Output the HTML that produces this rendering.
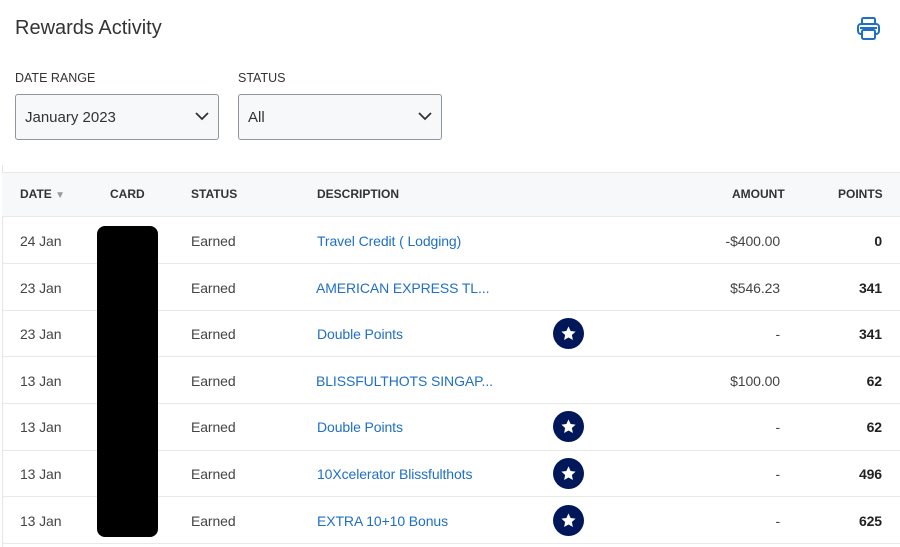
<!DOCTYPE html>
<html><head><style>
*{margin:0;padding:0;box-sizing:border-box}
body{width:900px;height:547px;background:#fff;font-family:"Liberation Sans",sans-serif;color:#333;position:relative;overflow:hidden}
.a{position:absolute}
.t{font-size:20px;color:#333;left:15px;top:17px}
.lbl{font-size:12.5px;color:#333;top:71px}
.sel{top:94px;height:46px;border:1px solid #8e959c;border-radius:3px;background:#f7f8f9;font-size:15px;color:#333;padding:14px 0 0 9px}
.sel svg{position:absolute;right:9px;top:17px}
.hdr{left:2px;top:172px;width:898px;height:45px;background:#f7f8f9;border-top:1px solid #e6e8ea;border-bottom:1px solid #e6e8ea}
.h{font-size:12px;font-weight:bold;color:#333;top:187px}
.row{left:2px;width:898px;height:47px;border-bottom:1px solid #e6e8ea}
.c{font-size:14px;color:#444;letter-spacing:-0.1px}
.lnk{color:#1f6fc5}
.r{text-align:right}
.b{font-weight:bold;color:#222}
.star{width:31px;height:31px;border-radius:50%;background:#00175a;left:553px}
.star svg{position:absolute;left:7px;top:7px}
</style></head><body>
<div class="a t">Rewards Activity</div>
<svg class="a" style="left:856px;top:16px" width="25" height="25" viewBox="0 0 25 25" fill="none" stroke="#1f6fc5" stroke-width="2"><rect x="6" y="2" width="13" height="6" rx="1.5"/><rect x="2" y="8" width="21" height="10" rx="3"/><rect x="6" y="14" width="13" height="9" rx="1.5" fill="#fff"/><line x1="4" y1="12" x2="21" y2="12"/></svg>
<div class="a lbl" style="left:15px">DATE RANGE</div>
<div class="a lbl" style="left:238px">STATUS</div>
<div class="a sel" style="left:15px;width:204px">January 2023<svg width="14" height="9" viewBox="0 0 14 9"><path d="M1 1l6 6 6-6" fill="none" stroke="#333" stroke-width="1.8"/></svg></div>
<div class="a sel" style="left:238px;width:204px">All<svg width="14" height="9" viewBox="0 0 14 9"><path d="M1 1l6 6 6-6" fill="none" stroke="#333" stroke-width="1.8"/></svg></div>
<div class="a" style="left:2px;top:165px;width:1px;height:382px;background:#e3e5e7"></div>
<div class="a hdr"></div>
<div class="a h" style="left:20px">DATE <span style="color:#999;font-size:10px">&#9660;</span></div>
<div class="a h" style="left:110px">CARD</div>
<div class="a h" style="left:191px">STATUS</div>
<div class="a h" style="left:317px">DESCRIPTION</div>
<div class="a h" style="left:732px">AMOUNT</div>
<div class="a h" style="left:838px">POINTS</div>

<div class="a row" style="top:217px"></div>
<div class="a row" style="top:264px"></div>
<div class="a row" style="top:310px"></div>
<div class="a row" style="top:357px"></div>
<div class="a row" style="top:404px"></div>
<div class="a row" style="top:450px"></div>
<div class="a row" style="top:497px"></div>

<div class="a c" style="left:20px;top:233px">24 Jan</div>
<div class="a c" style="left:191px;top:233px">Earned</div>
<div class="a c lnk" style="left:317px;top:233px">Travel Credit ( Lodging)</div>
<div class="a c r" style="right:120px;top:233px">-$400.00</div>
<div class="a c r b" style="right:18px;top:233px">0</div>

<div class="a c" style="left:20px;top:280px">23 Jan</div>
<div class="a c" style="left:191px;top:280px">Earned</div>
<div class="a c lnk" style="left:316px;top:280px">AMERICAN EXPRESS TL...</div>
<div class="a c r" style="right:120px;top:280px">$546.23</div>
<div class="a c r b" style="right:18px;top:280px">341</div>

<div class="a c" style="left:20px;top:326px">23 Jan</div>
<div class="a c" style="left:191px;top:326px">Earned</div>
<div class="a c lnk" style="left:317px;top:326px">Double Points</div>
<div class="a star" style="top:318px"><svg width="17" height="17" viewBox="0 0 24 24"><path d="M12 2l3 6.5 7 .8-5.2 4.8 1.4 7L12 17.6 5.8 21.1l1.4-7L2 9.3l7-.8z" fill="#fff"/></svg></div>
<div class="a c r" style="right:120px;top:326px">-</div>
<div class="a c r b" style="right:18px;top:326px">341</div>

<div class="a c" style="left:20px;top:373px">13 Jan</div>
<div class="a c" style="left:191px;top:373px">Earned</div>
<div class="a c lnk" style="left:316px;top:373px">BLISSFULTHOTS SINGAP...</div>
<div class="a c r" style="right:120px;top:373px">$100.00</div>
<div class="a c r b" style="right:18px;top:373px">62</div>

<div class="a c" style="left:20px;top:419px">13 Jan</div>
<div class="a c" style="left:191px;top:419px">Earned</div>
<div class="a c lnk" style="left:317px;top:419px">Double Points</div>
<div class="a star" style="top:411px"><svg width="17" height="17" viewBox="0 0 24 24"><path d="M12 2l3 6.5 7 .8-5.2 4.8 1.4 7L12 17.6 5.8 21.1l1.4-7L2 9.3l7-.8z" fill="#fff"/></svg></div>
<div class="a c r" style="right:120px;top:419px">-</div>
<div class="a c r b" style="right:18px;top:419px">62</div>

<div class="a c" style="left:20px;top:466px">13 Jan</div>
<div class="a c" style="left:191px;top:466px">Earned</div>
<div class="a c lnk" style="left:317px;top:466px">10Xcelerator Blissfulthots</div>
<div class="a star" style="top:458px"><svg width="17" height="17" viewBox="0 0 24 24"><path d="M12 2l3 6.5 7 .8-5.2 4.8 1.4 7L12 17.6 5.8 21.1l1.4-7L2 9.3l7-.8z" fill="#fff"/></svg></div>
<div class="a c r" style="right:120px;top:466px">-</div>
<div class="a c r b" style="right:18px;top:466px">496</div>

<div class="a c" style="left:20px;top:513px">13 Jan</div>
<div class="a c" style="left:191px;top:513px">Earned</div>
<div class="a c lnk" style="left:317px;top:513px">EXTRA 10+10 Bonus</div>
<div class="a star" style="top:505px"><svg width="17" height="17" viewBox="0 0 24 24"><path d="M12 2l3 6.5 7 .8-5.2 4.8 1.4 7L12 17.6 5.8 21.1l1.4-7L2 9.3l7-.8z" fill="#fff"/></svg></div>
<div class="a c r" style="right:120px;top:513px">-</div>
<div class="a c r b" style="right:18px;top:513px">625</div>

<div class="a" style="left:97px;top:226px;width:61px;height:311px;background:#000;border-radius:8px"></div>
</body></html>
